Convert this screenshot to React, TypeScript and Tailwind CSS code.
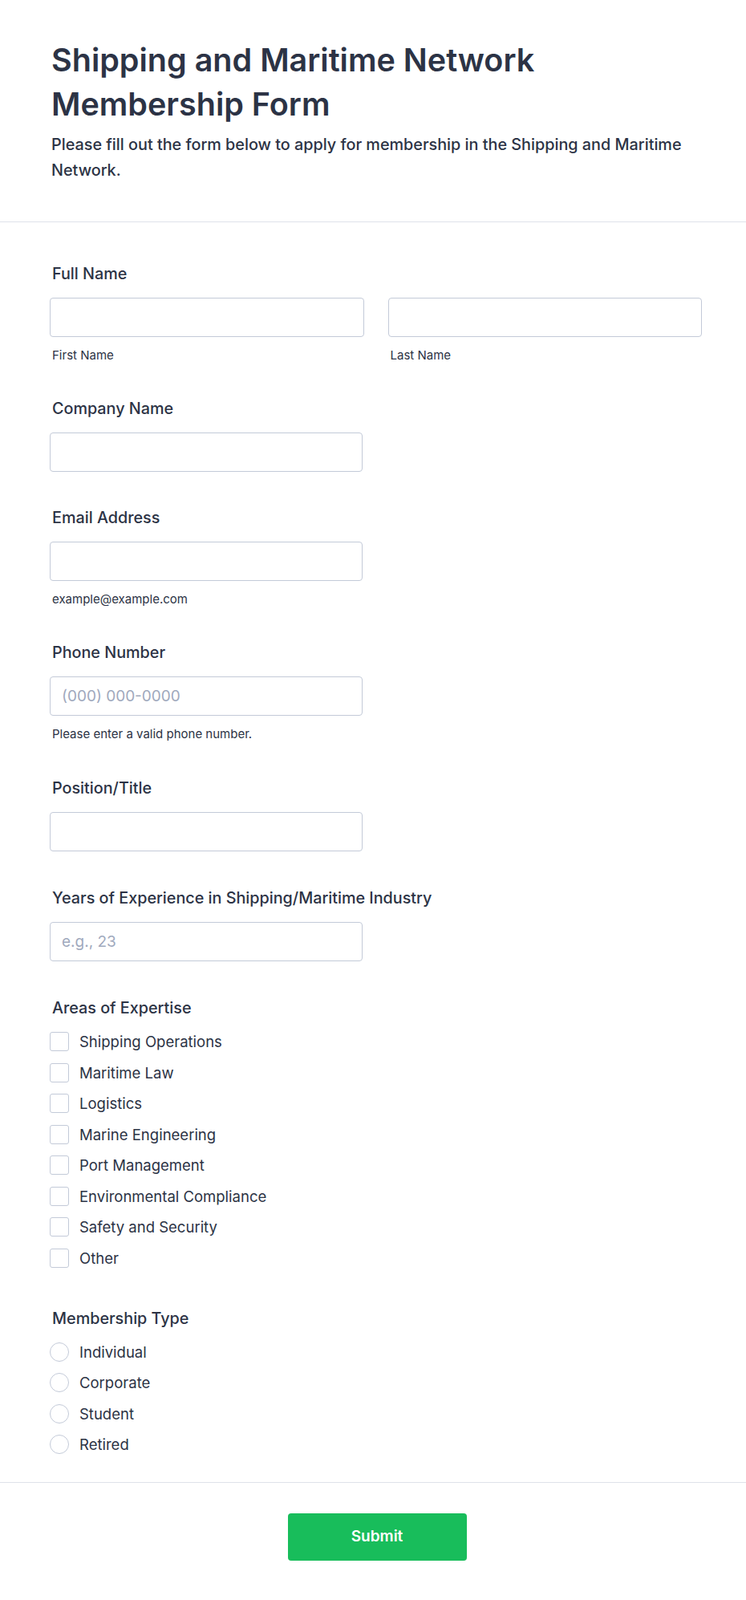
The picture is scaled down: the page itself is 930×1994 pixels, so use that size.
import React from "react";

const expertise = [
  "Shipping Operations",
  "Maritime Law",
  "Logistics",
  "Marine Engineering",
  "Port Management",
  "Environmental Compliance",
  "Safety and Security",
  "Other",
];

const memberships = ["Individual", "Corporate", "Student", "Retired"];

function Label({ children }: { children: React.ReactNode }) {
  return (
    <label className="block pl-[3px] text-[19.75px] leading-[24px] font-medium text-[#2c3345]">
      {children}
    </label>
  );
}

function TextInput({ placeholder }: { placeholder?: string }) {
  return (
    <input
      type="text"
      placeholder={placeholder}
      className="block h-[49px] w-full rounded-[4px] border border-[#c3cad8] bg-white px-[14px] text-[19px] text-[#2c3345] placeholder:text-[#a0a9bd] focus:outline-none"
    />
  );
}

function SubLabel({ children }: { children: React.ReactNode }) {
  return (
    <p className="mt-[13px] pl-[3px] text-[15px] leading-[20px] text-[#2c3345]">
      {children}
    </p>
  );
}

export default function App() {
  return (
    <main
      className="min-h-screen w-full bg-white text-[#2c3345]"
      style={{ fontFamily: "Inter, 'Liberation Sans', sans-serif" }}
    >
      {/* Header */}
      <header className="border-b border-[#dfe2ea] pt-[48px] pb-[48px] pl-[64px] pr-[55px]">
        <h1 className="text-[39.5px] leading-[55px] font-semibold text-[#2c3345]">
          Shipping and Maritime Network
          <br />
          Membership Form
        </h1>
        <p className="mt-[6px] text-[19.8px] leading-[32px] font-medium text-[#2c3345]">
          Please fill out the form below to apply for membership in the Shipping and Maritime
          Network.
        </p>
      </header>

      {/* Fields */}
      <form className="flex flex-col pt-[52px] pb-[35px] pl-[62px] pr-[55px]">
        <div>
          <Label>Full Name</Label>
          <div className="mt-[18px] grid grid-cols-2 gap-[30px]">
            <div>
              <TextInput />
              <SubLabel>First Name</SubLabel>
            </div>
            <div>
              <TextInput />
              <SubLabel>Last Name</SubLabel>
            </div>
          </div>
        </div>

        <div className="mt-[44px] w-[390px]">
          <Label>Company Name</Label>
          <div className="mt-[18px]">
            <TextInput />
          </div>
        </div>

        <div className="mt-[45px] w-[390px]">
          <Label>Email Address</Label>
          <div className="mt-[18px]">
            <TextInput />
          </div>
          <SubLabel>example@example.com</SubLabel>
        </div>

        <div className="mt-[44px] w-[390px]">
          <Label>Phone Number</Label>
          <div className="mt-[18px]">
            <TextInput placeholder="(000) 000-0000" />
          </div>
          <SubLabel>Please enter a valid phone number.</SubLabel>
        </div>

        <div className="mt-[45px] w-[390px]">
          <Label>Position/Title</Label>
          <div className="mt-[18px]">
            <TextInput />
          </div>
        </div>

        <div className="mt-[46px] w-[390px]">
          <Label>
            <span className="whitespace-nowrap">Years of Experience in Shipping/Maritime Industry</span>
          </Label>
          <div className="mt-[18px]">
            <TextInput placeholder="e.g., 23" />
          </div>
        </div>

        <div className="mt-[46px]">
          <Label>Areas of Expertise</Label>
          <div className="mt-[18px] flex flex-col gap-[14.5px]">
            {expertise.map((item) => (
              <label key={item} className="flex items-center gap-[13px]">
                <span className="h-[24px] w-[24px] shrink-0 rounded-[3px] border border-[#c3cad8] bg-white" />
                <span className="text-[18.5px] leading-[24px] text-[#2c3345]">{item}</span>
              </label>
            ))}
          </div>
        </div>

        <div className="mt-[51px]">
          <Label>Membership Type</Label>
          <div className="mt-[18px] flex flex-col gap-[14.5px]">
            {memberships.map((item) => (
              <label key={item} className="flex items-center gap-[13px]">
                <span className="h-[24px] w-[24px] shrink-0 rounded-full border border-[#c3cad8] bg-white" />
                <span className="text-[18.5px] leading-[24px] text-[#2c3345]">{item}</span>
              </label>
            ))}
          </div>
        </div>
      </form>

      {/* Footer */}
      <div className="flex justify-center border-t border-[#dfe2ea] pt-[38px] pb-[49px] pl-[10px]">
        <button
          type="button"
          className="h-[59px] w-[223px] rounded-[4px] bg-[#18bd5b] text-[19px] font-semibold text-white"
        >
          Submit
        </button>
      </div>
    </main>
  );
}
